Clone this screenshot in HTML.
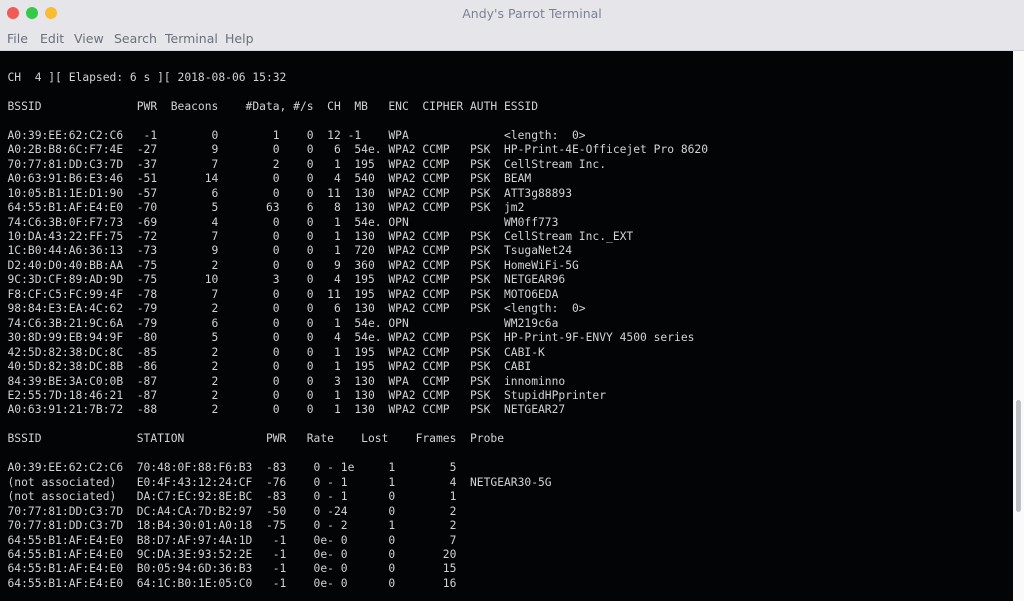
<!DOCTYPE html>
<html><head><meta charset="utf-8"><style>
html,body{margin:0;padding:0;width:1024px;height:601px;overflow:hidden;background:#fff}
.title{position:absolute;left:0;top:0;width:1024px;height:51px;background:#e6e6ea;border-bottom:1px solid #d4d4d8;box-sizing:border-box}
.dot{position:absolute;top:7px;width:12px;height:12px;border-radius:50%}
.t{position:absolute;top:6px;left:0;width:1064px;text-align:center;font:12.5px "DejaVu Sans","Liberation Sans",sans-serif;color:#7a8190}
.menu{position:absolute;top:31px;font:12.5px "DejaVu Sans","Liberation Sans",sans-serif;color:#6a6f7a}
.term{position:absolute;left:0;top:51px;width:1013px;height:550px;background:#030405;overflow:hidden}
pre{position:absolute;left:7.5px;top:20px;margin:0;font:11.3px/14.45px "DejaVu Sans Mono","Liberation Mono",monospace;color:#d2d2d2}
.sb{position:absolute;left:1013px;top:51px;width:11px;height:550px;background:#fafafa}
.thumb{position:absolute;left:1016px;top:400px;width:5px;height:112px;border-radius:3px;background:#c0c2c6}
</style></head><body>
<div class="title">
<div class="dot" style="left:7px;background:#f25a55"></div>
<div class="dot" style="left:26px;background:#35c94a"></div>
<div class="dot" style="left:45px;background:#f9bd33"></div>
<div class="t">Andy's Parrot Terminal</div>
<span class="menu" style="left:7px">File</span>
<span class="menu" style="left:40px">Edit</span>
<span class="menu" style="left:74px">View</span>
<span class="menu" style="left:114px">Search</span>
<span class="menu" style="left:165px">Terminal</span>
<span class="menu" style="left:225px">Help</span>
</div>
<div class="term"><pre>CH  4 ][ Elapsed: 6 s ][ 2018-08-06 15:32

BSSID              PWR  Beacons    #Data, #/s  CH  MB   ENC  CIPHER AUTH ESSID

A0:39:EE:62:C2:C6   -1        0        1    0  12 -1    WPA              &lt;length:  0&gt;
A0:2B:B8:6C:F7:4E  -27        9        0    0   6  54e. WPA2 CCMP   PSK  HP-Print-4E-Officejet Pro 8620
70:77:81:DD:C3:7D  -37        7        2    0   1  195  WPA2 CCMP   PSK  CellStream Inc.
A0:63:91:B6:E3:46  -51       14        0    0   4  540  WPA2 CCMP   PSK  BEAM
10:05:B1:1E:D1:90  -57        6        0    0  11  130  WPA2 CCMP   PSK  ATT3g88893
64:55:B1:AF:E4:E0  -70        5       63    6   8  130  WPA2 CCMP   PSK  jm2
74:C6:3B:0F:F7:73  -69        4        0    0   1  54e. OPN              WM0ff773
10:DA:43:22:FF:75  -72        7        0    0   1  130  WPA2 CCMP   PSK  CellStream Inc._EXT
1C:B0:44:A6:36:13  -73        9        0    0   1  720  WPA2 CCMP   PSK  TsugaNet24
D2:40:D0:40:BB:AA  -75        2        0    0   9  360  WPA2 CCMP   PSK  HomeWiFi-5G
9C:3D:CF:89:AD:9D  -75       10        3    0   4  195  WPA2 CCMP   PSK  NETGEAR96
F8:CF:C5:FC:99:4F  -78        7        0    0  11  195  WPA2 CCMP   PSK  MOTO6EDA
98:84:E3:EA:4C:62  -79        2        0    0   6  130  WPA2 CCMP   PSK  &lt;length:  0&gt;
74:C6:3B:21:9C:6A  -79        6        0    0   1  54e. OPN              WM219c6a
30:8D:99:EB:94:9F  -80        5        0    0   4  54e. WPA2 CCMP   PSK  HP-Print-9F-ENVY 4500 series
42:5D:82:38:DC:8C  -85        2        0    0   1  195  WPA2 CCMP   PSK  CABI-K
40:5D:82:38:DC:8B  -86        2        0    0   1  195  WPA2 CCMP   PSK  CABI
84:39:BE:3A:C0:0B  -87        2        0    0   3  130  WPA  CCMP   PSK  innominno
E2:55:7D:18:46:21  -87        2        0    0   1  130  WPA2 CCMP   PSK  StupidHPprinter
A0:63:91:21:7B:72  -88        2        0    0   1  130  WPA2 CCMP   PSK  NETGEAR27

BSSID              STATION            PWR   Rate    Lost    Frames  Probe

A0:39:EE:62:C2:C6  70:48:0F:88:F6:B3  -83    0 - 1e     1        5
(not associated)   E0:4F:43:12:24:CF  -76    0 - 1      1        4  NETGEAR30-5G
(not associated)   DA:C7:EC:92:8E:BC  -83    0 - 1      0        1
70:77:81:DD:C3:7D  DC:A4:CA:7D:B2:97  -50    0 -24      0        2
70:77:81:DD:C3:7D  18:B4:30:01:A0:18  -75    0 - 2      1        2
64:55:B1:AF:E4:E0  B8:D7:AF:97:4A:1D   -1    0e- 0      0        7
64:55:B1:AF:E4:E0  9C:DA:3E:93:52:2E   -1    0e- 0      0       20
64:55:B1:AF:E4:E0  B0:05:94:6D:36:B3   -1    0e- 0      0       15
64:55:B1:AF:E4:E0  64:1C:B0:1E:05:C0   -1    0e- 0      0       16</pre></div>
<div class="sb"></div><div class="thumb"></div>
</body></html>
